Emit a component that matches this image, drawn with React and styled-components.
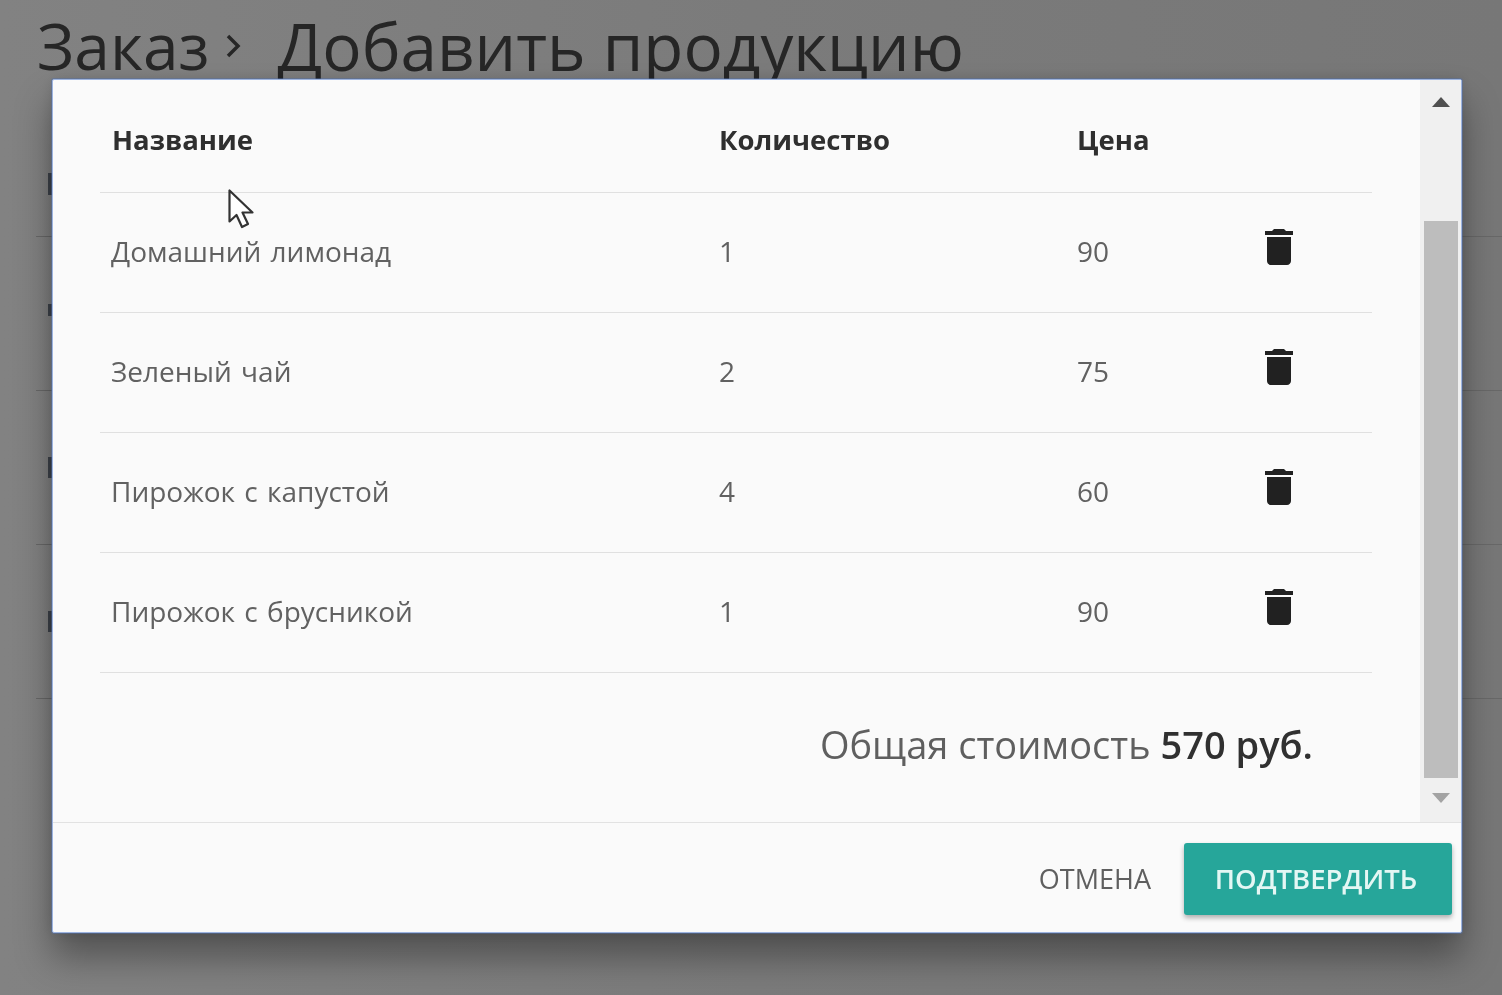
import React from 'react'
import styled, { createGlobalStyle } from 'styled-components'

const items = [
  { name: 'Домашний лимонад', qty: 1, price: 90 },
  { name: 'Зеленый чай', qty: 2, price: 75 },
  { name: 'Пирожок с капустой', qty: 4, price: 60 },
  { name: 'Пирожок с брусникой', qty: 1, price: 90 },
]

const GlobalStyle = createGlobalStyle`
  html, body {
    margin: 0;
    height: 100%;
    overflow: hidden;
    background: #7f7f7f;
    font-family: "Open Sans", "Noto Sans", sans-serif;
  }
  * { box-sizing: border-box; }
`

const Page = styled.div`
  height: 995px;
  padding: 0 0 0 36px;
  background: linear-gradient(to right, #828282, #7b7b7b 50%, #777);
`

const Breadcrumbs = styled.div`
  display: flex;
  align-items: center;
  height: 92px;
  padding: 0 0 0 1px;
  color: #262626;
  line-height: 92px;
  white-space: nowrap;
`

const Crumb = styled.span`
  font-size: ${(p) => p.$size}px;
`

const Chevron = styled.svg`
  width: 20px;
  height: 32px;
  margin: 0 33px 0 15px;
  fill: none;
  stroke: #262626;
  stroke-width: 3.5;
`

const BackRow = styled.div`
  display: flex;
  align-items: center;
  height: 154px;
  border-bottom: 1px solid #686868;
`

const FirstRow = styled(BackRow)`
  height: 145px;
`

const BackMark = styled.span`
  display: block;
  width: 4px;
  height: ${(p) => p.$size}px;
  margin-left: 12px;
  margin-top: ${(p) => p.$shift || 0}px;
  background: #3e424a;
`

const Modal = styled.div`
  position: fixed;
  left: 52px;
  top: 79px;
  width: 1410px;
  height: 854px;
  display: flex;
  flex-direction: column;
  background: #fafafa;
  border: 1px solid #9db4e0;
  border-radius: 2px;
  box-shadow: 0 0 0 1px rgba(80, 110, 170, 0.45), 0 24px 36px rgba(0, 0, 0, 0.36), 0 0 14px rgba(0, 0, 0, 0.12);
`

const Content = styled.div`
  display: flex;
  height: 743px;
  border-bottom: 1px solid #e2e2e2;
`

const TableWrap = styled.div`
  flex: 1;
  padding: 0 48px 0 47px;
`

const Row = styled.div`
  display: grid;
  grid-template-columns: 619px 358px 178px 1fr;
  align-items: center;
  height: ${(p) => (p.$head ? 113 : 120)}px;
  padding-top: ${(p) => (p.$head ? 6 : 0)}px;
  border-bottom: 1px solid #e0e0e0;
`

const HeadCell = styled.div`
  font-size: 27.5px;
  font-weight: 700;
  color: #2f2f2f;
  padding-left: ${(p) => (p.$first ? 12 : 0)}px;
`

const Cell = styled.div`
  font-size: 28px;
  word-spacing: 2px;
  color: #616161;
  padding-bottom: 4px;
  padding-left: ${(p) => (p.$first ? 11 : 0)}px;
`

const Trash = styled.svg`
  width: 48px;
  height: 48px;
  margin-bottom: 12px;
  fill: #212121;
  display: block;
`

const Total = styled.div`
  display: flex;
  justify-content: flex-end;
  align-items: center;
  height: 142px;
  padding-right: 59px;
  font-size: 38px;
  color: #5f5f5f;
  white-space: pre;
`

const TotalSum = styled.b`
  font-weight: 600;
  color: #303030;
`

const Scrollbar = styled.div`
  width: 41px;
  display: flex;
  flex-direction: column;
  align-items: center;
  background: #f0f0f0;
`

const ScrollButton = styled.div`
  height: ${(p) => p.$h}px;
  flex: none;
  display: flex;
  align-items: center;
  justify-content: center;
`

const Thumb = styled.div`
  width: 34px;
  height: 557px;
  background: #bdbdbd;
  flex: none;
`

const Spacer = styled.div`
  height: 97px;
  flex: none;
`

const Arrow = styled.svg`
  width: 18px;
  height: 10px;
  fill: ${(p) => p.$color};
`

const Footer = styled.div`
  flex: 1;
  display: flex;
  justify-content: flex-end;
  align-items: center;
  padding: 3px 9px 0 0;
`

const TextButton = styled.button`
  height: 72px;
  margin-right: 33px;
  padding: 0 0 2px;
  border: 0;
  background: none;
  font: 400 27px "Open Sans", sans-serif;
  color: #5f5f5f;
  text-transform: uppercase;
`

const ConfirmButton = styled.button`
  width: 268px;
  height: 72px;
  padding: 0 4px 2px 0;
  border: 0;
  border-radius: 3px;
  background: #26a69a;
  color: #e4f7f4;
  font: 600 27.5px "Open Sans", sans-serif;
  text-transform: uppercase;
  box-shadow: 0 3px 5px rgba(0, 0, 0, 0.3);
`

const Cursor = styled.svg`
  position: absolute;
  left: 175px;
  top: 109px;
  width: 26px;
  height: 40px;
`

export default function App() {
  return (
    <>
      <GlobalStyle />
      <Page>
        <Breadcrumbs>
          <Crumb $size={64}>Заказ</Crumb>
          <Chevron viewBox="0 0 20 32">
            <path d="M4 6l10 10-10 10" />
          </Chevron>
          <Crumb $size={65.5}>Добавить продукцию</Crumb>
        </Breadcrumbs>
        <FirstRow><BackMark $size={22} $shift={40} /></FirstRow>
        <BackRow><BackMark $size={12} $shift={-8} /></BackRow>
        <BackRow><BackMark $size={21} /></BackRow>
        <BackRow><BackMark $size={21} /></BackRow>
      </Page>
      <Modal>
        <Content>
          <TableWrap>
            <Row $head>
              <HeadCell $first>Название</HeadCell>
              <HeadCell>Количество</HeadCell>
              <HeadCell>Цена</HeadCell>
            </Row>
            {items.map((item) => (
              <Row key={item.name}>
                <Cell $first>{item.name}</Cell>
                <Cell>{item.qty}</Cell>
                <Cell>{item.price}</Cell>
                <Trash viewBox="0 0 24 24">
                  <path d="M6 19c0 1.1.9 2 2 2h8c1.1 0 2-.9 2-2V7H6v12zM19 4h-3.5l-1-1h-5l-1 1H5v2h14V4z" />
                </Trash>
              </Row>
            ))}
            <Total>
              Общая стоимость <TotalSum>570 руб.</TotalSum>
            </Total>
          </TableWrap>
          <Scrollbar>
            <ScrollButton $h={44}>
              <Arrow viewBox="0 0 18 10" $color="#505050"><path d="M9 0l9 10H0z" /></Arrow>
            </ScrollButton>
            <Spacer />
            <Thumb />
            <ScrollButton $h={40}>
              <Arrow viewBox="0 0 18 10" $color="#a3a3a3"><path d="M0 0h18L9 10z" /></Arrow>
            </ScrollButton>
          </Scrollbar>
        </Content>
        <Footer>
          <TextButton>Отмена</TextButton>
          <ConfirmButton>Подтвердить</ConfirmButton>
        </Footer>
        <Cursor viewBox="0 0 26 40">
          <path d="M1.5 1.5v31l7-6.5 5.5 12 6-3-5.5-11.5h10z" fill="#fff" stroke="#333" strokeWidth="2.2" strokeLinejoin="round" />
        </Cursor>
      </Modal>
    </>
  )
}
